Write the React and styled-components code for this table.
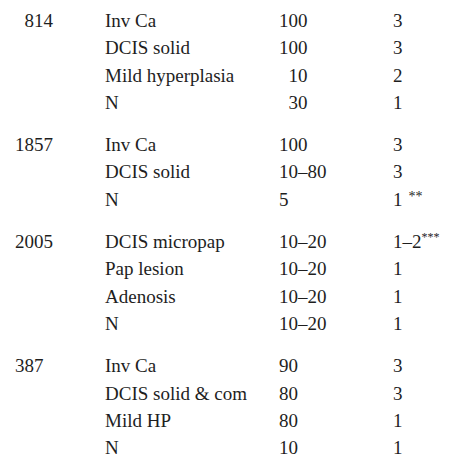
import React from "react";
import styled, { createGlobalStyle } from "styled-components";

const GlobalStyle = createGlobalStyle`
	html, body {
		margin: 0;
		padding: 0;
		background: #ffffff;
	}
	body {
		font-family: "Liberation Serif", "DejaVu Serif", serif;
		color: #1e1e1e;
	}
`;

// figure space keeps the short numbers lined up like the printed table
const FS = "\u2007";

const groups = [
	{
		id: FS + "814",
		rows: [
			["Inv Ca", "100", "3"],
			["DCIS solid", "100", "3"],
			["Mild hyperplasia", FS + "10", "2"],
			["N", FS + "30", "1"],
		],
	},
	{
		id: "1857",
		rows: [
			["Inv Ca", "100", "3"],
			["DCIS solid", "10–80", "3"],
			["N", "5", "1", "**", false],
		],
	},
	{
		id: "2005",
		rows: [
			["DCIS micropap", "10–20", "1–2", "***", true],
			["Pap lesion", "10–20", "1"],
			["Adenosis", "10–20", "1"],
			["N", "10–20", "1"],
		],
	},
	{
		id: "387",
		rows: [
			["Inv Ca", "90", "3"],
			["DCIS solid & com", "80", "3"],
			["Mild HP", "80", "1"],
			["N", "10", "1"],
		],
	},
];

const App = () => {
	return (
		<>
			<GlobalStyle />
			<Table>
				{groups.map((group) => (
					<Group key={group.id}>
						{group.rows.map(([type, pct, grade, note, sup], i) => (
							<Row key={type + i}>
								<Cell>{i === 0 ? group.id : ""}</Cell>
								<Cell>{type}</Cell>
								<Cell>{pct}</Cell>
								<Cell>
									{grade}
									{note && <Note $sup={sup}>{note}</Note>}
								</Cell>
							</Row>
						))}
					</Group>
				))}
			</Table>
		</>
	);
};

const Table = styled.div`
	display: flex;
	flex-direction: column;
	gap: 15px;
	padding: 7px 0 0 15px;
	width: 474px;
	box-sizing: border-box;
`;

const Group = styled.div`
	display: flex;
	flex-direction: column;
`;

const Row = styled.div`
	display: grid;
	grid-template-columns: 90px 174px 114px 1fr;
	height: 27.3px;
	font-family: "Liberation Serif", "DejaVu Serif", serif;
	font-size: 19px;
	line-height: 27.3px;
`;

const Cell = styled.div`
	white-space: nowrap;
`;

const Note = styled.span`
	font-size: ${(props) => (props.$sup ? "12px" : "14px")};
	position: relative;
	top: ${(props) => (props.$sup ? "-7px" : "-5px")};
	margin-left: ${(props) => (props.$sup ? "0" : "6px")};
`;

export default App;
